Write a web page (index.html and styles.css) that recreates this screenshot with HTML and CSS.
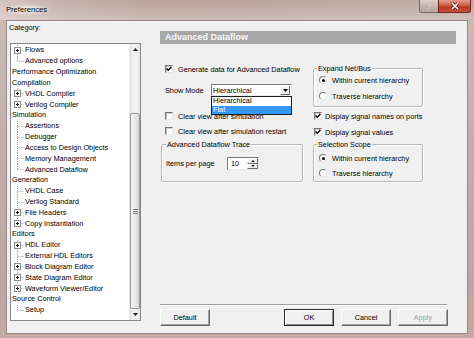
FILE: index.html
```html
<!DOCTYPE html>
<html>
<head>
<meta charset="utf-8">
<link rel="stylesheet" href="styles.css">
</head>
<body>
<svg class="defs" width="0" height="0">
  <defs>
    <symbol id="leaf" viewBox="0 0 14 11"><path d="M6.5 0V11M6.5 5.5H13" stroke="#a0a0a0" stroke-dasharray="1 1" fill="none"/></symbol>
    <symbol id="leaf-last" viewBox="0 0 14 11"><path d="M6.5 0V5.5M6.5 5.5H13" stroke="#a0a0a0" stroke-dasharray="1 1" fill="none"/></symbol>
    <symbol id="exp" viewBox="0 0 14 11"><path d="M6.5 0V2.5M6.5 8.5V11M9.5 5.5H13" stroke="#a0a0a0" stroke-dasharray="1 1" fill="none"/><rect x="3.5" y="2.5" width="6" height="6" fill="#fff" stroke="#8c8c8c"/><path d="M5 5.5H8M6.5 4V7" stroke="#000" fill="none"/></symbol>
    <symbol id="exp-last" viewBox="0 0 14 11"><path d="M6.5 0V2.5M9.5 5.5H13" stroke="#a0a0a0" stroke-dasharray="1 1" fill="none"/><rect x="3.5" y="2.5" width="6" height="6" fill="#fff" stroke="#8c8c8c"/><path d="M5 5.5H8M6.5 4V7" stroke="#000" fill="none"/></symbol>
    <symbol id="tick" viewBox="0 0 6 6"><path d="M0.6 2.6L2.2 4.3L5.4 0.9" stroke="#000" stroke-width="1.4" fill="none"/></symbol>
  </defs>
</svg>
<div class="window">
  <div class="titlebar">
    <span class="title">Preferences</span>
    <div class="caption">
      <div class="cbtn help">?</div>
      <div class="cbtn close"><svg width="10" height="8" viewBox="0 0 10 8"><path d="M2 1L8 7M8 1L2 7" stroke="#5a1a12" stroke-width="3"/><path d="M2 1L8 7M8 1L2 7" stroke="#fff" stroke-width="1.6"/></svg></div>
    </div>
  </div>
  <div class="client">
    <div class="left">
      <div class="cat-label">Category:</div>
      <div class="tree">
        <div class="items">
          <div class="row"><svg class="tl"><use href="#exp"/></svg>Flows</div>
          <div class="row"><svg class="tl"><use href="#leaf-last"/></svg>Advanced options</div>
          <div class="row root">Performance Optimization</div>
          <div class="row root">Compilation</div>
          <div class="row"><svg class="tl"><use href="#exp"/></svg>VHDL Compiler</div>
          <div class="row"><svg class="tl"><use href="#exp-last"/></svg>Verilog Compiler</div>
          <div class="row root">Simulation</div>
          <div class="row"><svg class="tl"><use href="#leaf"/></svg>Assertions</div>
          <div class="row"><svg class="tl"><use href="#leaf"/></svg>Debugger</div>
          <div class="row"><svg class="tl"><use href="#leaf"/></svg>Access to Design Objects</div>
          <div class="row"><svg class="tl"><use href="#leaf"/></svg>Memory Management</div>
          <div class="row"><svg class="tl"><use href="#leaf-last"/></svg>Advanced Dataflow</div>
          <div class="row root">Generation</div>
          <div class="row"><svg class="tl"><use href="#leaf"/></svg>VHDL Case</div>
          <div class="row"><svg class="tl"><use href="#leaf"/></svg>Verilog Standard</div>
          <div class="row"><svg class="tl"><use href="#exp"/></svg>File Headers</div>
          <div class="row"><svg class="tl"><use href="#exp-last"/></svg>Copy Instantiation</div>
          <div class="row root">Editors</div>
          <div class="row"><svg class="tl"><use href="#exp"/></svg>HDL Editor</div>
          <div class="row"><svg class="tl"><use href="#leaf"/></svg>External HDL Editors</div>
          <div class="row"><svg class="tl"><use href="#exp"/></svg>Block Diagram Editor</div>
          <div class="row"><svg class="tl"><use href="#exp"/></svg>State Diagram Editor</div>
          <div class="row"><svg class="tl"><use href="#exp-last"/></svg>Waveform Viewer/Editor</div>
          <div class="row root">Source Control</div>
          <div class="row"><svg class="tl"><use href="#leaf-last"/></svg>Setup</div>
        </div>
        <div class="vscroll">
          <div class="sbtn"><svg width="5" height="3" viewBox="0 0 5 3"><path d="M0 3L2.5 0L5 3Z" fill="#222"/></svg></div>
          <div class="track"><div class="thumb"><span class="grip"></span></div></div>
          <div class="sbtn"><svg width="5" height="3" viewBox="0 0 5 3"><path d="M0 0L2.5 3L5 0Z" fill="#222"/></svg></div>
        </div>
      </div>
    </div>
    <div class="right">
      <div class="header">Advanced Dataflow</div>
      <div class="cols">
        <div class="col-a">
          <div class="check c1"><span class="box"><svg class="tick"><use href="#tick"/></svg></span>Generate data for Advanced Dataflow</div>
          <div class="mode-row">
            <span class="mode-lbl">Show Mode</span>
            <div class="combo"><span class="combo-txt">Hierarchical</span><span class="drop-btn"><svg width="5" height="3" viewBox="0 0 5 3"><path d="M0 0L2.5 3L5 0Z" fill="#000"/></svg></span></div>
            <div class="droplist">
              <div class="opt">Hierarchical</div>
              <div class="opt sel">Flat</div>
            </div>
          </div>
          <div class="check c2"><span class="box"></span>Clear view after simulation</div>
          <div class="check c3"><span class="box"></span>Clear view after simulation restart</div>
          <div class="group g1">
            <div class="gtitle">Advanced Dataflow Trace</div>
            <div class="items-row">
              <span class="items-lbl">Items per page</span>
              <div class="spin"><span class="spin-txt">10</span><span class="spin-btns"><span class="sb"><svg width="5" height="3" viewBox="0 0 5 3"><path d="M0 3L2.5 0L5 3Z" fill="#000"/></svg></span><span class="sb"><svg width="5" height="3" viewBox="0 0 5 3"><path d="M0 0L2.5 3L5 0Z" fill="#000"/></svg></span></span></div>
            </div>
          </div>
        </div>
        <div class="col-b">
          <div class="group g2">
            <div class="gtitle">Expand Net/Bus</div>
            <div class="radio r1"><span class="rb on"></span>Within current hierarchy</div>
            <div class="radio r2"><span class="rb"></span>Traverse hierarchy</div>
          </div>
          <div class="check c4"><span class="box"><svg class="tick"><use href="#tick"/></svg></span>Display signal names on ports</div>
          <div class="check c5"><span class="box"><svg class="tick"><use href="#tick"/></svg></span>Display signal values</div>
          <div class="group g3">
            <div class="gtitle">Selection Scope</div>
            <div class="radio r3"><span class="rb on"></span>Within current hierarchy</div>
            <div class="radio r4"><span class="rb"></span>Traverse hierarchy</div>
          </div>
        </div>
      </div>
      <div class="spacer"></div>
      <div class="sep"></div>
      <div class="buttons">
        <div class="btn">Default</div>
        <div class="btn def ok">OK</div>
        <div class="btn">Cancel</div>
        <div class="btn dis">Apply</div>
      </div>
    </div>
  </div>
</div>
</body>
</html>
```

FILE: styles.css
```css
* { box-sizing: border-box; margin: 0; padding: 0; }
html, body { width: 474px; height: 338px; overflow: hidden; }
body {
  font-family: "Liberation Sans", Arial, sans-serif;
  font-size: 7.3px;
  color: #000;
  background: #c4b1ac;
}
.defs { position: absolute; width: 0; height: 0; }

.window {
  width: 474px;
  height: 338px;
  display: flex;
  flex-direction: column;
  background: linear-gradient(180deg, #b8a09a 0, #cbb9b4 19px, #c3b0ac 40%, #bba5a2 85%, #c6a9a5 100%);
}
.titlebar {
  height: 20px;
  display: flex;
  align-items: flex-start;
  flex: none;
  background: linear-gradient(90deg, rgba(235,226,222,0.55) 0, rgba(235,226,222,0.2) 70px, rgba(0,0,0,0) 160px, rgba(255,255,255,0.08) 400px);
}
.title {
  margin: 4px 0 0 1px;
  padding: 0 5px;
  font-size: 7.6px;
  line-height: 11px;
  color: #000;
  background: radial-gradient(ellipse at center, rgba(240,235,232,0.85) 30%, rgba(240,235,232,0) 72%);
}
.caption { margin-left: auto; margin-right: 3px; display: flex; }
.cbtn { height: 13px; display: flex; align-items: center; justify-content: center; }
.help {
  width: 19px;
  border: 1px solid #7d6a66;
  border-right: none;
  border-top: none;
  border-radius: 0 0 0 3px;
  background: linear-gradient(180deg, #dccfcc, #c4b1ad 55%, #b9a4a0);
  color: #f4f0ee;
  font-weight: bold;
  font-size: 7.5px;
  text-shadow: 0 0 1px #6d5c58;
}
.close {
  width: 33px;
  border: 1px solid #6e2a20;
  border-top: none;
  border-radius: 0 0 3px 0;
  background: linear-gradient(180deg, #e49d8d, #cf5c47 45%, #b8361f 60%, #c9543b);
}

.client {
  margin-left: 6px;
  width: 462px;
  height: 314px;
  border: 1px solid #9a8985;
  background: #f0f0f0;
  display: flex;
  flex: none;
}

/* left pane */
.left { width: 153px; padding-top: 1px; flex: none; }
.cat-label { margin-left: 2px; line-height: 11px; }
.tree {
  margin: 10px 0 0 3px;
  width: 131px;
  height: 278px;
  border: 1px solid #828790;
  background: #fff;
  display: flex;
}
.items { flex: 1; padding-top: 1px; overflow: hidden; }
.row {
  height: 10.83px;
  display: flex;
  align-items: center;
  white-space: nowrap;
  line-height: 10px;
}
.row.root { padding-left: 1px; }
.tl { width: 14px; height: 11px; flex: none; }

.vscroll {
  width: 11px;
  display: flex;
  flex-direction: column;
  background: linear-gradient(90deg, #e3e3e3, #f2f2f2 35%, #f2f2f2 65%, #e6e6e6);
  border-left: 1px solid #ececec;
}
.sbtn { height: 11px; display: flex; align-items: center; justify-content: center; flex: none; }
.track { flex: 1; display: flex; flex-direction: column; }
.thumb {
  margin-top: 58px;
  flex: 1;
  border: 1px solid #979797;
  border-radius: 2px;
  background: linear-gradient(90deg, #f6f6f6, #e9e9e9 50%, #d9d9d9);
  display: flex;
  align-items: center;
  justify-content: center;
}
.grip {
  width: 5px;
  height: 5px;
  border-top: 1px solid #7a7a7a;
  border-bottom: 1px solid #7a7a7a;
  background: linear-gradient(#fff 0, #fff 1px, #7a7a7a 1px, #7a7a7a 2px, transparent 2px);
  background-size: 100% 100%;
}

/* right pane */
.right {
  width: 296px;
  display: flex;
  flex-direction: column;
  padding-top: 10px;
  flex: none;
}
.header {
  height: 13px;
  background: #a7a7a7;
  color: #f7f7f7;
  font-weight: bold;
  font-size: 9px;
  line-height: 13px;
  padding-left: 5px;
  flex: none;
}
.cols { display: flex; flex: none; }
.col-a { width: 142px; margin-left: 1px; display: flex; flex-direction: column; }
.col-b { width: 110px; margin-left: 10px; display: flex; flex-direction: column; }

.check {
  display: flex;
  align-items: center;
  height: 10px;
  white-space: nowrap;
  padding-left: 4px;
  gap: 5px;
}
.col-b .check { padding-left: 1px; gap: 3px; }
.box {
  width: 8px;
  height: 8px;
  flex: none;
  border: 1px solid;
  border-color: #767676 #e6e6e6 #e6e6e6 #767676;
  background: #fff;
  box-shadow: inset 1px 1px #c8c8c8;
  display: flex;
  align-items: center;
  justify-content: center;
}
.tick { width: 6px; height: 6px; }
.c1 { margin-top: 20px; }
.c2 { margin-top: 15px; }
.c3 { margin-top: 5px; }
.c4 { margin-top: 4px; }
.c5 { margin-top: 6px; }

.mode-row {
  margin-top: 10px;
  height: 12px;
  display: flex;
  align-items: center;
  padding-left: 4px;
  position: relative;
}
.mode-lbl { width: 46px; flex: none; }
.combo {
  width: 81px;
  height: 12px;
  border: 1px solid;
  border-color: #7a7a7a #e9e9e9 #e9e9e9 #7a7a7a;
  background: #fff;
  display: flex;
  align-items: center;
}
.combo-txt { flex: 1; padding-left: 1px; }
.drop-btn {
  width: 10px;
  height: 9px;
  margin-right: 1px;
  border: 1px solid;
  border-color: #fff #6a6a6a #6a6a6a #fff;
  background: #f0f0f0;
  display: flex;
  align-items: center;
  justify-content: center;
}
.droplist {
  position: absolute;
  top: 12px;
  left: 50px;
  width: 81px;
  height: 19px;
  border: 1px solid #1e1e1e;
  background: #fff;
  z-index: 2;
}
.opt { height: 8.5px; line-height: 8.5px; padding-left: 1px; }
.opt.sel { background: #3399ff; color: #fff; }

.group {
  border: 1px solid #b9b9b9;
  box-shadow: inset 1px 1px #fff, 1px 1px #fff;
  border-radius: 2px;
  display: flex;
  flex-direction: column;
}
.gtitle {
  margin: -6px 0 0 4px;
  padding: 0 1px;
  height: 11px;
  line-height: 11px;
  background: #f0f0f0;
  align-self: flex-start;
  white-space: nowrap;
}
.g1 { margin-top: 8px; height: 38px; }
.g2 { margin-top: 24px; height: 39px; }
.g2 .gtitle { margin-left: 3px; }
.g3 { margin-top: 7px; height: 38px; }
.g3 .gtitle { margin-left: 3px; }

.items-row {
  margin-top: 7px;
  height: 13px;
  display: flex;
  align-items: center;
  padding-left: 4px;
}
.items-lbl { width: 61px; flex: none; }
.spin {
  width: 32px;
  height: 13px;
  border: 1px solid;
  border-color: #7a7a7a #e9e9e9 #e9e9e9 #7a7a7a;
  background: #fff;
  display: flex;
  align-items: center;
}
.spin-txt { flex: 1; padding-left: 3px; }
.spin-btns { width: 11px; height: 11px; display: flex; flex-direction: column; margin-right: 0; }
.sb {
  flex: 1;
  border: 1px solid;
  border-color: #fff #6a6a6a #6a6a6a #fff;
  background: #f0f0f0;
  display: flex;
  align-items: center;
  justify-content: center;
}
.sb svg { width: 4px; height: 2px; }

.radio {
  display: flex;
  align-items: center;
  height: 10px;
  white-space: nowrap;
  padding-left: 5px;
  gap: 5px;
}
.rb {
  width: 8px;
  height: 8px;
  flex: none;
  border-radius: 50%;
  border: 1px solid;
  border-color: #7a7a7a #e6e6e6 #e6e6e6 #7a7a7a;
  background: #fff;
  display: flex;
  align-items: center;
  justify-content: center;
}
.rb.on::after {
  content: "";
  width: 3px;
  height: 3px;
  border-radius: 50%;
  background: #000;
}
.r1 { margin-top: 1px; }
.r2 { margin-top: 6px; }
.r3 { margin-top: 3px; }
.r4 { margin-top: 5px; }

.spacer { flex: 1; }
.sep {
  width: 287px;
  height: 2px;
  border-top: 1px solid #a0a0a0;
  border-bottom: 1px solid #fff;
  flex: none;
}
.buttons {
  margin-top: 3px;
  margin-bottom: 7px;
  width: 288px;
  height: 17px;
  display: flex;
  gap: 7px;
  flex: none;
}
.btn {
  width: 50px;
  height: 17px;
  border: 1px solid;
  border-color: #fff #6a6a6a #6a6a6a #fff;
  box-shadow: inset -1px -1px #a0a0a0;
  background: #f0f0f0;
  display: flex;
  align-items: center;
  justify-content: center;
}
.btn.ok { margin-left: auto; }
.btn.def { border-color: #2a2a2a; box-shadow: inset 1px 1px #fff, inset -1px -1px #8a8a8a; }
.btn.dis { color: #a0a0a0; }
```
